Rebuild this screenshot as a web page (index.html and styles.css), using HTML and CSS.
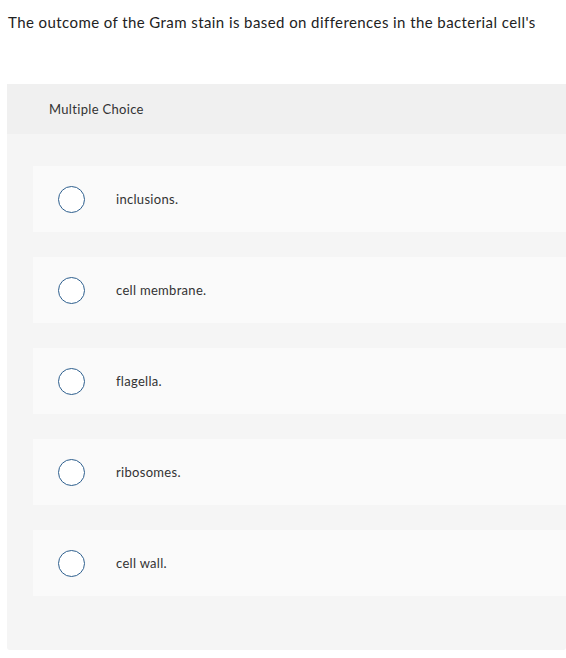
FILE: index.html
```html
<!DOCTYPE html>
<html>
<head>
<meta charset="utf-8">
<link rel="stylesheet" href="styles.css">
</head>
<body>
<p class="prompt">The outcome of the Gram stain is based on differences in the bacterial cell's</p>
<section class="panel">
  <header class="panel-head">Multiple Choice</header>
  <div class="options">
    <label class="option"><span class="radio"></span><span class="label">inclusions.</span></label>
    <label class="option"><span class="radio"></span><span class="label">cell membrane.</span></label>
    <label class="option"><span class="radio"></span><span class="label">flagella.</span></label>
    <label class="option"><span class="radio"></span><span class="label">ribosomes.</span></label>
    <label class="option"><span class="radio"></span><span class="label">cell wall.</span></label>
  </div>
</section>
</body>
</html>
```
FILE: styles.css
```css
html, body { margin: 0; padding: 0; background: #fff; }
body {
  font-family: "Lato", "Liberation Sans", sans-serif;
  color: #333;
  overflow: hidden;
}
.prompt {
  margin: 0;
  padding: 12px 0 0 8px;
  font-size: 15px;
  line-height: 20px;
  letter-spacing: 0.42px;
  color: #222;
  height: 72px;
}
.panel {
  margin-left: 7px;
  background: #f5f5f5;
  border-radius: 0 0 3px 3px;
  height: 566px;
}
.panel-head {
  background: #f0f0f0;
  height: 50px;
  box-sizing: border-box;
  padding: 17px 0 0 42px;
  font-size: 13px;
  line-height: 16px;
  letter-spacing: 0.32px;
  color: #333;
}
.options {
  padding: 32px 0 0 26px;
  display: flex;
  flex-direction: column;
  gap: 25px;
}
.option {
  display: flex;
  align-items: center;
  height: 66px;
  background: #fafafa;
  padding-left: 25px;
}
.radio {
  width: 25px;
  height: 25px;
  border: 1.5px solid #2e5f8e;
  border-radius: 50%;
  background: #fff;
  flex: none;
}
.label {
  margin-left: 31px;
  font-size: 13px;
  letter-spacing: 0.3px;
  color: #333;
}
```
